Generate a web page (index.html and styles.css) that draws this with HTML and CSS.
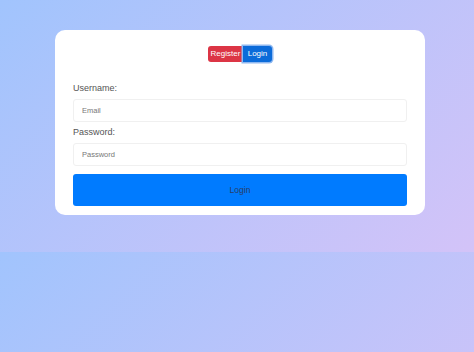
FILE: index.html
```html
<!DOCTYPE html>
<html>
<head>
<meta charset="utf-8">
<link rel="stylesheet" href="styles.css">
</head>
<body>
<div class="page">
  <div class="card">
    <div class="tabs">
      <button class="tab tab-register">Register</button>
      <button class="tab tab-login">Login</button>
    </div>
    <form class="form">
      <label class="label">Username:</label>
      <input class="input" type="text" placeholder="Email">
      <label class="label label-second">Password:</label>
      <input class="input" type="password" placeholder="Password">
      <button type="button" class="submit">Login</button>
    </form>
  </div>
</div>
</body>
</html>
```
FILE: styles.css
```css
html {
  background: linear-gradient(135deg, #a1c4fd 0%, #d3c3f8 100%);
}
body {
  margin: 0;
  font-family: "Liberation Sans", Arial, sans-serif;
}
.page {
  padding: 30px 49px 37px 55px;
}
.card {
  width: 370px;
  box-sizing: border-box;
  background: #fff;
  border-radius: 10px;
  padding: 16px 18px 9px 18px;
}
.tabs {
  display: flex;
  justify-content: center;
  height: 16px;
}
.tab {
  font-family: inherit;
  font-size: 8px;
  color: #fff;
  border: none;
  height: 16px;
  padding: 0;
  margin: 0;
  line-height: 16px;
  text-align: center;
}
.tab-register {
  background: #dc3545;
  border-radius: 3px 0 0 3px;
  width: 35px;
}
.tab-login {
  background: #0b6bd9;
  border-radius: 0 3px 3px 0;
  width: 29px;
  box-shadow: 0 0 0 1.5px #8fb8f0;
}
.form {
  display: flex;
  flex-direction: column;
  margin: 0;
}
.label {
  font-size: 9px;
  line-height: 11px;
  color: #555;
  margin-top: 21px;
  margin-bottom: 5px;
}
.label-second {
  margin-top: 5px;
}
.input {
  height: 23px;
  box-sizing: border-box;
  border: 1px solid #f0f0f0;
  border-radius: 3px;
  padding: 0 8px;
  font-family: inherit;
  font-size: 7.5px;
  color: #333;
  outline: none;
}
.input::placeholder {
  color: #777;
}
.submit {
  margin-top: 8px;
  height: 32px;
  border: none;
  border-radius: 3px;
  background: #007bff;
  color: #2a3d66;
  font-family: inherit;
  font-size: 8.5px;
}
```
